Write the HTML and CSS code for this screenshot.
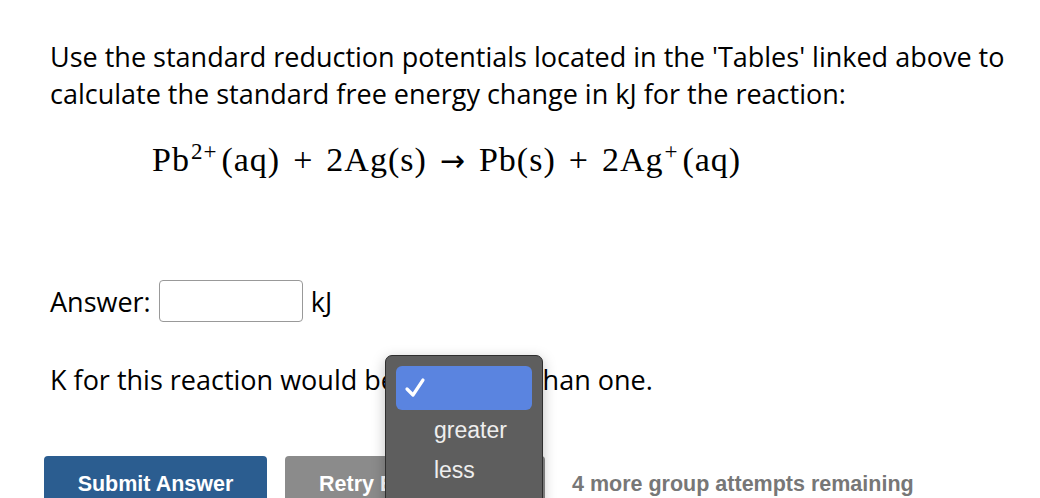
FILE: index.html
```html
<!DOCTYPE html>
<html lang="en">
<head>
  <meta charset="UTF-8">
  <title>Question</title>
  <link rel="stylesheet" href="styles.css">
</head>
<body>

  <div class="question">
    <p class="prompt">Use the standard reduction potentials located in the 'Tables' linked above to calculate the standard free energy change in kJ for the reaction:</p>

    <div class="equation">Pb<sup>2+</sup>(aq)<span class="op">+</span>2Ag(s)<span class="op arrow">&rarr;</span>Pb(s)<span class="op">+</span>2Ag<sup>+</sup>(aq)</div>

    <div class="answer-row">
      <span>Answer:</span>
      <input class="answer-input" type="text">
      <span>kJ</span>
    </div>

    <div class="k-row">
      K for this reaction would be
      <span class="select-wrap">
        <!-- open native menu -->
        <div class="menu">
          <div class="menu-item selected">
            <svg class="check" width="22" height="22" viewBox="0 0 22 22"><polyline points="3,12 9,18 19,3" fill="none" stroke="#fff" stroke-width="3.2" stroke-linecap="round" stroke-linejoin="round"/></svg>
          </div>
          <div class="menu-item">greater</div>
          <div class="menu-item">less</div>
        </div>
      </span>
      than one.
    </div>

    <div class="actions">
      <button class="btn btn-submit">Submit Answer</button>
      <button class="btn btn-retry">Retry Entire Group</button>
      <span class="attempts">4 more group attempts remaining</span>
    </div>
  </div>

</body>
</html>
```

FILE: styles.css
```css
body {
  margin: 0;
  background: #fff;
  color: #000;
  font-family: "Open Sans", sans-serif;
  overflow: hidden;
}

.question {
  padding: 38px 30px 0 50px;
  font-size: 27px;
}

.prompt {
  margin: 0;
  line-height: 37px;
}

.equation {
  font-family: "Liberation Serif", serif;
  font-size: 34px;
  letter-spacing: 1px;
  line-height: 40px;
  margin: 28px 0 0 102px;
  height: 140px;
}

.equation sup {
  font-size: 23px;
  line-height: 0;
  margin-right: 4px;
  margin-left: 1px;
}

.op {
  margin: 0 13px;
}

.op.arrow {
  font-family: "DejaVu Sans", sans-serif;
  font-size: 30px;
  margin: 0 13px;
}

.answer-row {
  display: flex;
  align-items: center;
  gap: 8px;
}

.answer-input {
  width: 144px;
  height: 42px;
  box-sizing: border-box;
  border: 1px solid #999;
  border-radius: 4px;
  margin: 0;
}

.k-row {
  margin-top: 39px;
  line-height: 37px;
  white-space: nowrap;
}

.select-wrap {
  position: relative;
  display: inline-block;
  width: 123px;
  height: 30px;
  vertical-align: middle;
}

.menu {
  position: absolute;
  left: -18px;
  top: -13px;
  width: 158px;
  height: 160px;
  box-sizing: border-box;
  background: #5e5e5e;
  border: 1px solid #2e2e2e;
  border-radius: 7px;
  padding: 10px 10px;
  font-family: "Liberation Sans", sans-serif;
  font-size: 23px;
  color: #eee;
  box-shadow: 0 4px 14px rgba(0, 0, 0, 0.25);
}

.menu-item {
  height: 40px;
  line-height: 40px;
  padding-left: 38px;
}

.menu-item.selected {
  background: #5a84e0;
  border-radius: 6px;
  height: 44px;
  padding-left: 8px;
  display: flex;
  align-items: center;
}

.actions {
  display: flex;
  align-items: center;
  margin-top: 58px;
  margin-left: -6px;
}

.btn {
  font-family: "Liberation Sans", sans-serif;
  font-weight: bold;
  font-size: 21.5px;
  color: #fff;
  border: none;
  border-radius: 4px;
  height: 56px;
  padding: 0;
  margin-right: 18px;
}

.btn-submit {
  background: #2b5d90;
  width: 223px;
}

.btn-retry {
  background: #8b8b8b;
  width: 260px;
  text-align: left;
  padding-left: 34px;
}

.attempts {
  font-family: "Liberation Sans", sans-serif;
  font-weight: bold;
  font-size: 21.5px;
  color: #777;
  margin-left: 9px;
}
```
